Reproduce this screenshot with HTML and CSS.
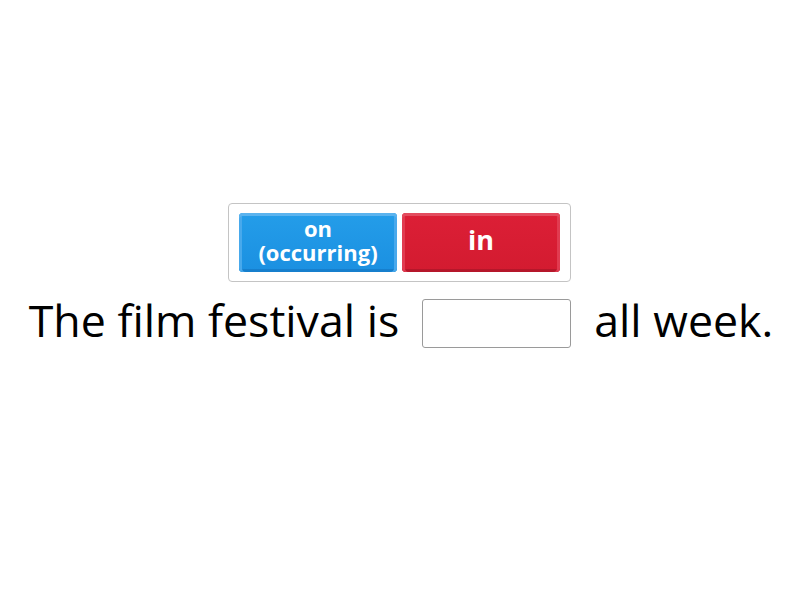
FILE: index.html
```html
<!DOCTYPE html>
<html>
<head>
<meta charset="utf-8">
<link rel="stylesheet" href="styles.css">
</head>
<body>
<div class="stage">
  <div class="tray">
    <div class="btn blue"><span class="label small">on<br>(occurring)</span></div>
    <div class="btn red"><span class="label big">in</span></div>
  </div>
  <div class="sentence">
    <span class="words">The film festival is</span>
    <span class="blank"></span>
    <span class="words">all week.</span>
  </div>
</div>
</body>
</html>
```
FILE: styles.css
```css
html, body {
  margin: 0;
  padding: 0;
  background: #fff;
  width: 800px;
  height: 600px;
  overflow: hidden;
  font-family: "Open Sans", "DejaVu Sans", sans-serif;
}
.stage {
  display: flex;
  flex-direction: column;
  align-items: center;
  padding-top: 203px;
}
.tray {
  display: flex;
  gap: 5px;
  padding: 9px 10px 9px 10px;
  border: 1px solid #c4c4c4;
  border-radius: 4px;
  margin-left: -1px;
}
.btn {
  width: 158px;
  height: 59px;
  border-radius: 4px;
  box-sizing: border-box;
  display: flex;
  align-items: center;
  justify-content: center;
  color: #fff;
  font-weight: 700;
  text-align: center;
}
.blue {
  background: linear-gradient(#249de9, #1b90e1);
  box-shadow: inset 0 3px 0 #5bb3ee, inset 3px 0 0 #48a9ec, inset -3px 0 0 #48a9ec, inset 0 -3px 0 #167fcd;
}
.red {
  background: linear-gradient(#dc1f36, #d31b30);
  box-shadow: inset 0 3px 0 #e34c5e, inset 3px 0 0 #e13b50, inset -3px 0 0 #e13b50, inset 0 -3px 0 #b5172a;
}
.label.small {
  font-size: 22px;
  line-height: 24px;
  margin-top: -6px;
}
.label.big {
  font-size: 27px;
  line-height: 30px;
  margin-top: -6px;
}
.sentence {
  display: flex;
  align-items: center;
  margin-top: 16px;
  font-size: 44.7px;
  color: #000;
  height: 50px;
  margin-left: 2px;
}
.words {
  margin-bottom: 8px;
}
.blank {
  width: 147px;
  height: 47px;
  border: 1px solid #9a9a9a;
  border-radius: 3px;
  margin: 0 23px 0 23px;
}
```
